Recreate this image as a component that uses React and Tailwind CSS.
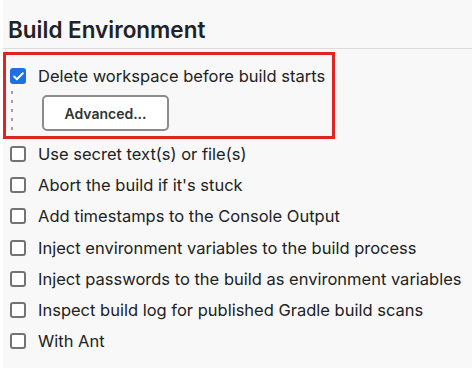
import { Check } from "lucide-react";

const options = [
  "Use secret text(s) or file(s)",
  "Abort the build if it's stuck",
  "Add timestamps to the Console Output",
  "Inject environment variables to the build process",
  "Inject passwords to the build as environment variables",
  "Inspect build log for published Gradle build scans",
  "With Ant",
];

function Box({ checked }) {
  if (checked) {
    return (
      <span className="w-[16px] h-[16px] rounded-[3px] bg-[#1f6fe5] flex items-center justify-center shrink-0">
        <Check className="w-[13px] h-[13px] text-white" strokeWidth={3.5} />
      </span>
    );
  }
  return <span className="w-[16px] h-[16px] rounded-[3px] border-2 border-[#737373] bg-white shrink-0" />;
}

export default function App() {
  return (
    <div className="w-[474px] h-[372px] bg-white" style={{ fontFamily: "Inter, 'Liberation Sans', Arial, sans-serif" }}>
      <div className="ml-[3px] w-[469px] h-[368px] bg-[#f8f8f8] text-[#222]">
        <h2 className="pl-[5px] pt-[17px] pb-[5px] text-[22.5px] leading-[26px] font-semibold text-[#222] border-b border-[#dcdcdc]">
          Build Environment
        </h2>

        <div className="mt-[3px] w-[332px] h-[87px] border-[3px] border-[#e02424] pt-[11px]">
          <label className="flex items-center gap-[12px] pl-[4px]">
            <Box checked />
            <span className="text-[16.5px] leading-[20px]">Delete workspace before build starts</span>
          </label>
          <div className="flex mt-[9px] pl-[5px]">
            <svg width="2" height="40" className="-mt-[4px] shrink-0">
              <line x1="1" y1="0" x2="1" y2="40" stroke="#a0a0a0" strokeWidth="2" strokeDasharray="3 6" />
            </svg>
            <button className="ml-[29px] w-[127px] h-[36px] rounded-[5px] border-2 border-[#8c8c8c] bg-white text-[14px] font-semibold text-[#333]">
              Advanced...
            </button>
          </div>
        </div>

        <div className="-mt-[1px] flex flex-col">
          {options.map((o) => (
            <label key={o} className="flex items-center gap-[12px] pl-[7px] h-[31.3px]">
              <Box />
              <span className="text-[16.5px] leading-[20px]">{o}</span>
            </label>
          ))}
        </div>
      </div>
    </div>
  );
}
